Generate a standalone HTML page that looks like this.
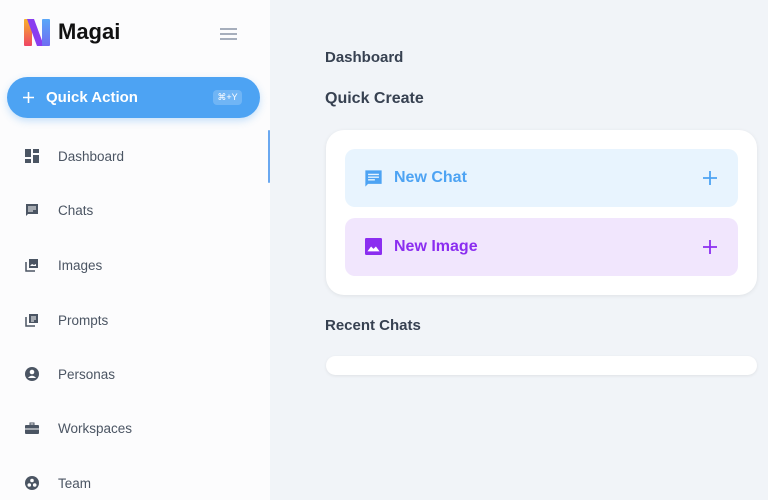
<!DOCTYPE html><html><head><style>
*{margin:0;padding:0;box-sizing:border-box}
body{width:768px;height:500px;overflow:hidden;background:#f1f4f8;font-family:"Liberation Sans",sans-serif;position:relative}
.sb{position:absolute;left:0;top:0;width:270px;height:500px;background:#fcfcfd}
.nav{position:absolute;left:25px;display:flex;align-items:center;font-size:13.5px;color:#4b5563;height:18px}
.nav svg{width:14px;height:14px;margin-right:19px;flex-shrink:0}
.a{position:absolute}
.pl{position:absolute;left:358px;top:22px;width:14px;height:14px}
</style></head><body>
<div class="sb">
<svg class="a" style="left:24px;top:19px" width="26" height="27" viewBox="0 0 26 27"><defs><linearGradient id="g" x1="0" y1="0" x2="0" y2="1"><stop offset="0" stop-color="#f7b32b"/><stop offset="1" stop-color="#ef4464"/></linearGradient><linearGradient id="b" x1="0" y1="0" x2="0" y2="1"><stop offset="0" stop-color="#5aa8f8"/><stop offset="1" stop-color="#6f6cf2"/></linearGradient></defs><rect x="0" y="0" width="8" height="27" rx="1" fill="url(#g)"/><path d="M3 0h7l10 27h-7z" fill="#8a3df0"/><rect x="18" y="0" width="8" height="27" rx="1" fill="url(#b)"/></svg>
<div class="a" style="left:58px;top:19px;font-size:22px;font-weight:bold;color:#111">Magai</div>
<svg class="a" style="left:220px;top:28px" width="17" height="12"><path d="M0 1h17M0 6h17M0 11h17" stroke="#8a94a6" stroke-width="1.6"/></svg>
<div class="a" style="left:7px;top:77px;width:253px;height:41px;border-radius:21px;background:#4da3f3;box-shadow:0 3px 8px rgba(77,163,243,.3);color:#fff">
<svg class="a" style="left:16px;top:15px" width="11" height="11"><path d="M5.5 0v11M0 5.5h11" stroke="#fff" stroke-width="1.6"/></svg>
<span class="a" style="left:39px;top:12px;font-size:15px;font-weight:bold">Quick Action</span>
<span class="a" style="left:206px;top:13px;width:29px;height:15px;border-radius:4px;background:rgba(255,255,255,.2);font-size:9px;text-align:center;line-height:15px">⌘+Y</span></div>
<div class="nav" style="top:147px"><svg viewBox="0 0 14 14" fill="#4b5563"><rect x="0" y="0" width="6" height="8"/><rect x="8" y="0" width="6" height="4"/><rect x="0" y="10" width="6" height="4"/><rect x="8" y="6" width="6" height="8"/></svg>Dashboard</div>
<div class="nav" style="top:201px"><svg viewBox="0 0 14 14" fill="#4b5563"><path d="M1 1h12v10H3l-2 2z"/><path d="M3 4h8M3 6h8M3 8h5" stroke="#fff" stroke-width="1"/></svg>Chats</div>
<div class="nav" style="top:256px"><svg viewBox="0 0 14 14" fill="#4b5563"><path d="M4 1h9v9H4z"/><path d="M1 4v9h9" fill="none" stroke="#4b5563" stroke-width="1.5"/><path d="M5 8l2-2 2 1 2-1v2z" fill="#fff"/></svg>Images</div>
<div class="nav" style="top:311px"><svg viewBox="0 0 14 14" fill="#4b5563"><path d="M4 1h9v9H4z"/><path d="M1 4v9h9" fill="none" stroke="#4b5563" stroke-width="1.5"/><path d="M6 4h5M6 6h5M6 8h3" stroke="#fff"/></svg>Prompts</div>
<div class="nav" style="top:365px"><svg viewBox="0 0 14 14"><circle cx="7" cy="7" r="7" fill="#4b5563"/><circle cx="7" cy="5" r="2.3" fill="#fff"/><path d="M3 11c2-3 6-3 8 0" fill="#fff"/></svg>Personas</div>
<div class="nav" style="top:419px"><svg viewBox="0 0 14 14" fill="#4b5563"><path d="M5 2h4v2H5z" fill="none" stroke="#4b5563"/><rect x="0" y="4" width="14" height="9" rx="1"/><path d="M0 8h14" stroke="#fff"/></svg>Workspaces</div>
<div class="nav" style="top:474px"><svg viewBox="0 0 14 14"><circle cx="7" cy="7" r="7" fill="#4b5563"/><circle cx="7" cy="4.5" r="1.8" fill="#fff"/><circle cx="4.3" cy="9" r="1.8" fill="#fff"/><circle cx="9.7" cy="9" r="1.8" fill="#fff"/></svg>Team</div>
<div class="a" style="left:268px;top:130px;width:2px;height:53px;background:#6aa8f0;border-radius:1px"></div>
</div>
<div class="a" style="left:325px;top:49px;font-size:15px;font-weight:bold;color:#374151">Dashboard</div>
<div class="a" style="left:325px;top:90px;font-size:16px;font-weight:bold;color:#374151">Quick Create</div>
<div class="a" style="left:326px;top:130px;width:431px;height:165px;background:#fff;border-radius:18px;box-shadow:0 1px 4px rgba(0,0,0,.08)"></div>
<div class="a" style="left:345px;top:149px;width:393px;height:58px;background:#e8f4fe;border-radius:10px;color:#4da3f3">
<svg class="a" style="left:19px;top:20px" width="19" height="19" viewBox="0 0 14 14"><path d="M1 1h12v10H3l-2 2z" fill="#4da3f3"/><path d="M3 4h8M3 6h8M3 8h5" stroke="#e8f4fe" stroke-width="1"/></svg>
<span class="a" style="left:49px;top:20px;font-size:16px;font-weight:bold">New Chat</span>
<svg class="pl"><path d="M7 0v14M0 7h14" stroke="#4da3f3" stroke-width="1.8"/></svg></div>
<div class="a" style="left:345px;top:218px;width:393px;height:58px;background:#f1e6fd;border-radius:10px;color:#8b2ef0">
<svg class="a" style="left:20px;top:20px" width="17" height="17" viewBox="0 0 14 14"><rect width="14" height="14" rx="1" fill="#8b2ef0"/><path d="M2 11l3-4 2 2 2-2 3 4z" fill="#fff"/></svg>
<span class="a" style="left:49px;top:20px;font-size:16px;font-weight:bold">New Image</span>
<svg class="pl"><path d="M7 0v14M0 7h14" stroke="#8b2ef0" stroke-width="1.8"/></svg></div>
<div class="a" style="left:325px;top:317px;font-size:15px;font-weight:bold;color:#374151">Recent Chats</div>
<div class="a" style="left:326px;top:356px;width:431px;height:19px;background:#fff;border-radius:10px;box-shadow:0 1px 3px rgba(0,0,0,.08)"></div>
</body></html>
